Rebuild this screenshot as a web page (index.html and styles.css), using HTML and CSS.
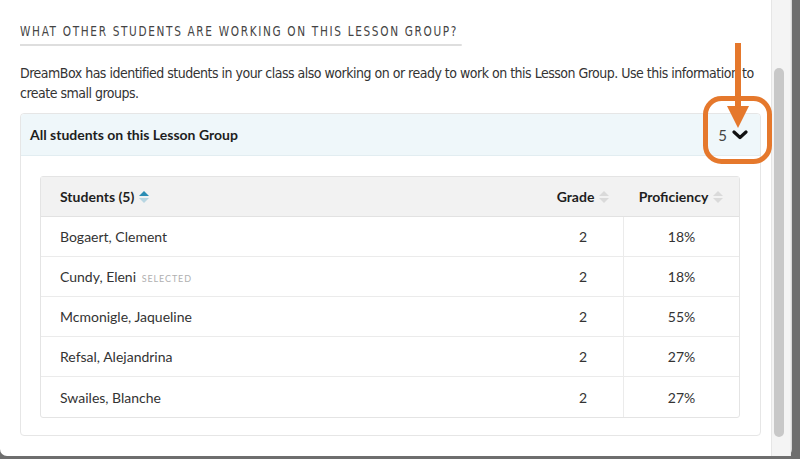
FILE: index.html
```html
<!DOCTYPE html>
<html lang="en">
<head>
<meta charset="utf-8">
<title>Lesson Group Students</title>
<link rel="stylesheet" href="styles.css">
</head>
<body>
<div class="window">
  <main class="content">
    <div class="title-row">
      <h2 class="section-title">What other students are working on this Lesson Group?</h2>
    </div>
    <p class="intro">DreamBox has identified students in your class also working on or ready to work on this Lesson Group. Use this information to create small groups.</p>
    <section class="panel">
      <header class="panel-head">
        <span class="panel-title">All students on this Lesson Group</span>
        <span class="panel-count">5
          <svg class="chevron" width="16" height="10" viewBox="0 0 16 10"><path d="M2 2 L8 7.5 L14 2" fill="none" stroke="#111" stroke-width="3.2" stroke-linecap="round" stroke-linejoin="round"/></svg>
        </span>
      </header>
      <div class="panel-body">
        <table class="students">
          <thead>
            <tr>
              <th class="col-name"><span class="th-in">Students (5) <span class="sort active"><i class="up"></i><i class="down"></i></span></span></th>
              <th class="col-grade"><span class="th-in">Grade <span class="sort"><i class="up"></i><i class="down"></i></span></span></th>
              <th class="col-prof"><span class="th-in">Proficiency <span class="sort"><i class="up"></i><i class="down"></i></span></span></th>
            </tr>
          </thead>
          <tbody>
            <tr><td class="col-name">Bogaert, Clement</td><td class="col-grade">2</td><td class="col-prof">18%</td></tr>
            <tr><td class="col-name">Cundy, Eleni <span class="tag">SELECTED</span></td><td class="col-grade">2</td><td class="col-prof">18%</td></tr>
            <tr><td class="col-name">Mcmonigle, Jaqueline</td><td class="col-grade">2</td><td class="col-prof">55%</td></tr>
            <tr><td class="col-name">Refsal, Alejandrina</td><td class="col-grade">2</td><td class="col-prof">27%</td></tr>
            <tr><td class="col-name">Swailes, Blanche</td><td class="col-grade">2</td><td class="col-prof">27%</td></tr>
          </tbody>
        </table>
      </div>
    </section>
  </main>
  <div class="scrollbar"><div class="thumb"></div></div>
  <svg class="callout" width="90" height="140" viewBox="0 0 90 140">
    <rect x="7.5" y="60.5" width="64" height="63" rx="16" fill="none" stroke="#e5782c" stroke-width="5"/>
    <rect x="37" y="5" width="6" height="66" fill="#e5782c"/>
    <polygon points="29,68 51,68 40,90" fill="#e5782c"/>
  </svg>
</div>
</body>
</html>
```
FILE: styles.css
```css
* { box-sizing: border-box; }
html, body { margin: 0; padding: 0; }
body {
  background: #6e6e6e;
  width: 800px;
  height: 459px;
  overflow: hidden;
  font-family: Lato, "Open Sans", sans-serif;
  color: #333;
}
.window {
  position: relative;
  display: flex;
  width: 792px;
  height: 456px;
  background: #fff;
  border-right: 1px solid #d8d8d8;
  border-radius: 0 0 7px 7px;
}
.content {
  flex: 1;
  padding: 20px 10px 0 20px;
  min-width: 0;
}
.title-row { height: 23px; }
.section-title {
  display: inline-block;
  margin: 0;
  padding: 0 4px 4px 0;
  font-family: "DejaVu Sans Condensed", "DejaVu Sans", sans-serif;
  font-stretch: condensed;
  font-weight: normal;
  font-size: 14px;
  line-height: 17px;
  letter-spacing: 2px;
  text-transform: uppercase;
  white-space: nowrap;
  color: #444;
  border-bottom: 2px solid #dedede;
  transform: scaleX(0.835);
  transform-origin: left top;
}
.intro {
  margin: 20px 0 10px;
  font-family: "DejaVu Sans Condensed", "DejaVu Sans", sans-serif;
  font-stretch: condensed;
  font-size: 14px;
  letter-spacing: -0.5px;
  line-height: 20px;
  color: #333;
}
.panel {
  border: 1px solid #e6e6e6;
  border-radius: 4px;
  height: 323px;
}
.panel-head {
  display: flex;
  align-items: center;
  justify-content: space-between;
  height: 42px;
  padding: 0 12px 0 9px;
  background: #eff7fa;
  border-bottom: 1px solid #e2edf1;
  border-radius: 4px 4px 0 0;
}
.panel-title {
  font-weight: bold;
  font-size: 14px;
  color: #1e1e1e;
}
.panel-count {
  display: flex;
  align-items: center;
  gap: 5px;
  font-size: 15px;
  color: #444;
}
.chevron { display: block; margin-top: 1px; }
.panel-body {
  padding: 20px 20px 0 19px;
}
.students {
  width: 100%;
  border-collapse: separate;
  border-spacing: 0;
  border: 1px solid #e4e4e4;
  border-radius: 3px;
  font-size: 14px;
}
.students th, .students td {
  height: 40px;
  padding: 0;
  vertical-align: middle;
}
.students th {
  background: #f2f2f2;
  font-weight: bold;
  color: #1e1e1e;
  border-bottom: 1px solid #e2e2e2;
}
.students td {
  color: #333;
  border-bottom: 1px solid #ebebeb;
}
.students tbody tr:last-child td { border-bottom: none; }
.col-name { text-align: left; padding-left: 19px !important; }
.col-grade { width: 80px; text-align: center; }
.col-prof { width: 116px; text-align: center; }
.students td.col-prof { border-left: 1px solid #ebebeb; }
.th-in { display: inline-flex; align-items: center; gap: 5px; }
.sort {
  display: inline-flex;
  flex-direction: column;
  gap: 2px;
}
.sort i {
  display: block;
  width: 0;
  height: 0;
  border-left: 5px solid transparent;
  border-right: 5px solid transparent;
}
.sort .up { border-bottom: 5px solid #dadada; }
.sort .down { border-top: 5px solid #dadada; }
.sort.active .up { border-bottom-color: #2b8db4; }
.sort.active .down { border-top-color: #b8d6e2; }
.tag {
  margin-left: 2px;
  font-size: 9px;
  letter-spacing: 0.9px;
  color: #b0b0b0;
}
.scrollbar {
  width: 20px;
  height: 100%;
  background: #f4f4f4;
  border-left: 1px solid #e6e6e6;
  border-right: 1px solid #ececec;
  padding: 68px 0 0 2px;
}
.thumb {
  width: 10px;
  height: 369px;
  background: #c8c8c8;
  border-radius: 5px;
}
.callout {
  position: absolute;
  left: 698px;
  top: 38px;
}
```
